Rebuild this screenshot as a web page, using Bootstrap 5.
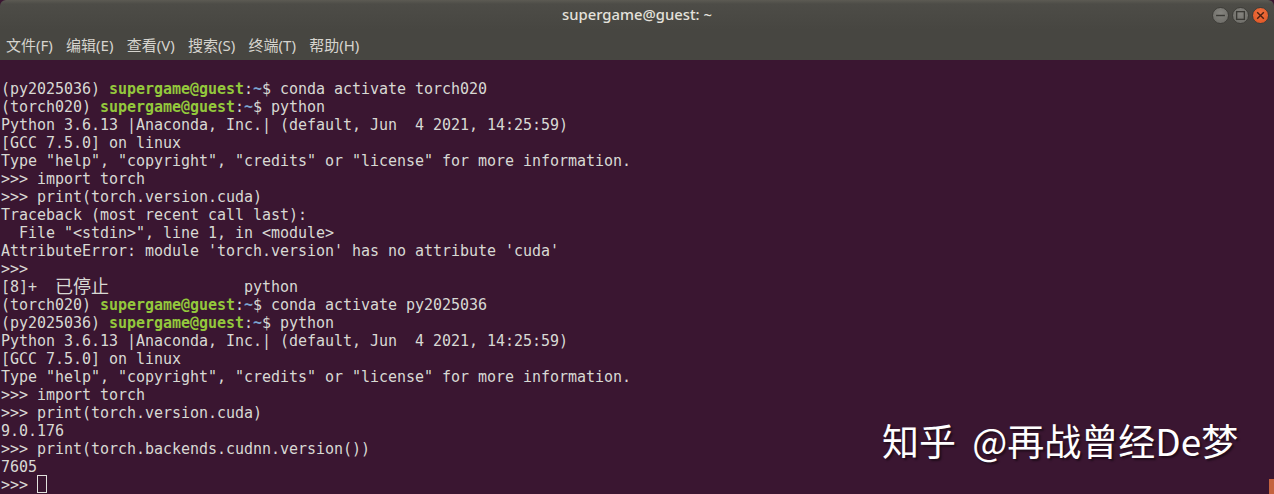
<!DOCTYPE html>
<html lang="zh">
<head>
<meta charset="utf-8">
<title>supergame@guest: ~</title>
<link href="https://cdn.jsdelivr.net/npm/bootstrap@5.3.0/dist/css/bootstrap.min.css" rel="stylesheet">
<style>
html,body{height:100%;background:#3a1631;overflow:hidden}
.term-window{width:1274px;height:494px;position:relative;background:#3a1631}
.title-strip{height:30px;background:linear-gradient(#5c5a53 0,#4d4c47 4px,#474641 100%);border-radius:6px 6px 0 0;color:#e4e2dc;font:500 14.8px/29px "Noto Sans","Noto Sans CJK SC",sans-serif;position:relative}
.win-controls{position:absolute;top:7px;right:5px;gap:3px}
.win-btn{width:17px;height:17px;border-radius:50%;background:radial-gradient(circle at 50% 35%,#85847f,#6a6964);border:1px solid #3e3d39;display:flex;align-items:center;justify-content:center}
.win-close{background:radial-gradient(circle at 50% 35%,#f0713f,#de5322)}
.menu-strip{height:30px;background:#474641;color:#d6d4ce;font:15px/31px "Noto Sans","Noto Sans CJK SC",sans-serif;padding-left:6px;gap:13.3px}
.term-body{padding-top:2px;color:#d8d9d4;font:15px/18px "DejaVu Sans Mono","Noto Sans CJK SC",monospace;background:#3a1631;height:434px}
.tline{height:18px;white-space:pre;padding-left:1px;letter-spacing:-.03px}
.pg{color:#93c83c;font-weight:700}
.pb{color:#7ba3cf;font-weight:700}
.cjk{display:inline-block;width:54px;height:18px;overflow:visible;font:18px/14px "Noto Sans CJK SC",sans-serif;vertical-align:top}
.cursor{display:inline-block;width:10px;height:18px;border:1px solid #e2e2de;vertical-align:top;margin-top:-1px}
.mark-wm{position:absolute;left:882px;top:417px;color:#fff;font:400 37px/46px "Noto Sans CJK SC",sans-serif;word-spacing:8px;text-shadow:2px 2px 2px rgba(0,0,0,.45);white-space:pre}
.scroll-nub{position:absolute;right:0;bottom:0;width:5px;height:15px;background:#c4633f}
</style>
</head>
<body class="m-0">
<div class="term-window">
  <div class="title-strip text-center">supergame@guest: ~
    <div class="win-controls d-flex">
      <div class="win-btn"><svg width="11" height="11" viewBox="0 0 10 10"><path d="M1 5h8" stroke="#3a3935" stroke-width="1.3"/></svg></div>
      <div class="win-btn"><svg width="11" height="11" viewBox="0 0 10 10"><rect x="1.5" y="1.5" width="7" height="7" fill="none" stroke="#3a3935" stroke-width="1.2"/></svg></div>
      <div class="win-btn win-close"><svg width="11" height="11" viewBox="0 0 10 10"><path d="M2 2l6 6M8 2l-6 6" stroke="#4a2012" stroke-width="1.3"/></svg></div>
    </div>
  </div>
  <div class="menu-strip d-flex">
    <span>文件(F)</span><span>编辑(E)</span><span>查看(V)</span><span>搜索(S)</span><span>终端(T)</span><span>帮助(H)</span>
  </div>
  <div class="term-body">
    <div class="tline"> </div>
    <div class="tline">(py2025036) <span class="pg">supergame@guest</span>:<span class="pb">~</span>$ conda activate torch020</div>
    <div class="tline">(torch020) <span class="pg">supergame@guest</span>:<span class="pb">~</span>$ python</div>
    <div class="tline">Python 3.6.13 |Anaconda, Inc.| (default, Jun  4 2021, 14:25:59)</div>
    <div class="tline">[GCC 7.5.0] on linux</div>
    <div class="tline">Type "help", "copyright", "credits" or "license" for more information.</div>
    <div class="tline">&gt;&gt;&gt; import torch</div>
    <div class="tline">&gt;&gt;&gt; print(torch.version.cuda)</div>
    <div class="tline">Traceback (most recent call last):</div>
    <div class="tline">  File "&lt;stdin&gt;", line 1, in &lt;module&gt;</div>
    <div class="tline">AttributeError: module 'torch.version' has no attribute 'cuda'</div>
    <div class="tline">&gt;&gt;&gt;</div>
    <div class="tline">[8]+  <span class="cjk">已停止</span>               python</div>
    <div class="tline">(torch020) <span class="pg">supergame@guest</span>:<span class="pb">~</span>$ conda activate py2025036</div>
    <div class="tline">(py2025036) <span class="pg">supergame@guest</span>:<span class="pb">~</span>$ python</div>
    <div class="tline">Python 3.6.13 |Anaconda, Inc.| (default, Jun  4 2021, 14:25:59)</div>
    <div class="tline">[GCC 7.5.0] on linux</div>
    <div class="tline">Type "help", "copyright", "credits" or "license" for more information.</div>
    <div class="tline">&gt;&gt;&gt; import torch</div>
    <div class="tline">&gt;&gt;&gt; print(torch.version.cuda)</div>
    <div class="tline">9.0.176</div>
    <div class="tline">&gt;&gt;&gt; print(torch.backends.cudnn.version())</div>
    <div class="tline">7605</div>
    <div class="tline">&gt;&gt;&gt; <span class="cursor"></span></div>
  </div>
  <div class="mark-wm">知乎 @再战曾经De梦</div>
  <div class="scroll-nub"></div>
</div>
<script src="https://cdn.jsdelivr.net/npm/bootstrap@5.3.0/dist/js/bootstrap.bundle.min.js"></script>
</body>
</html>
